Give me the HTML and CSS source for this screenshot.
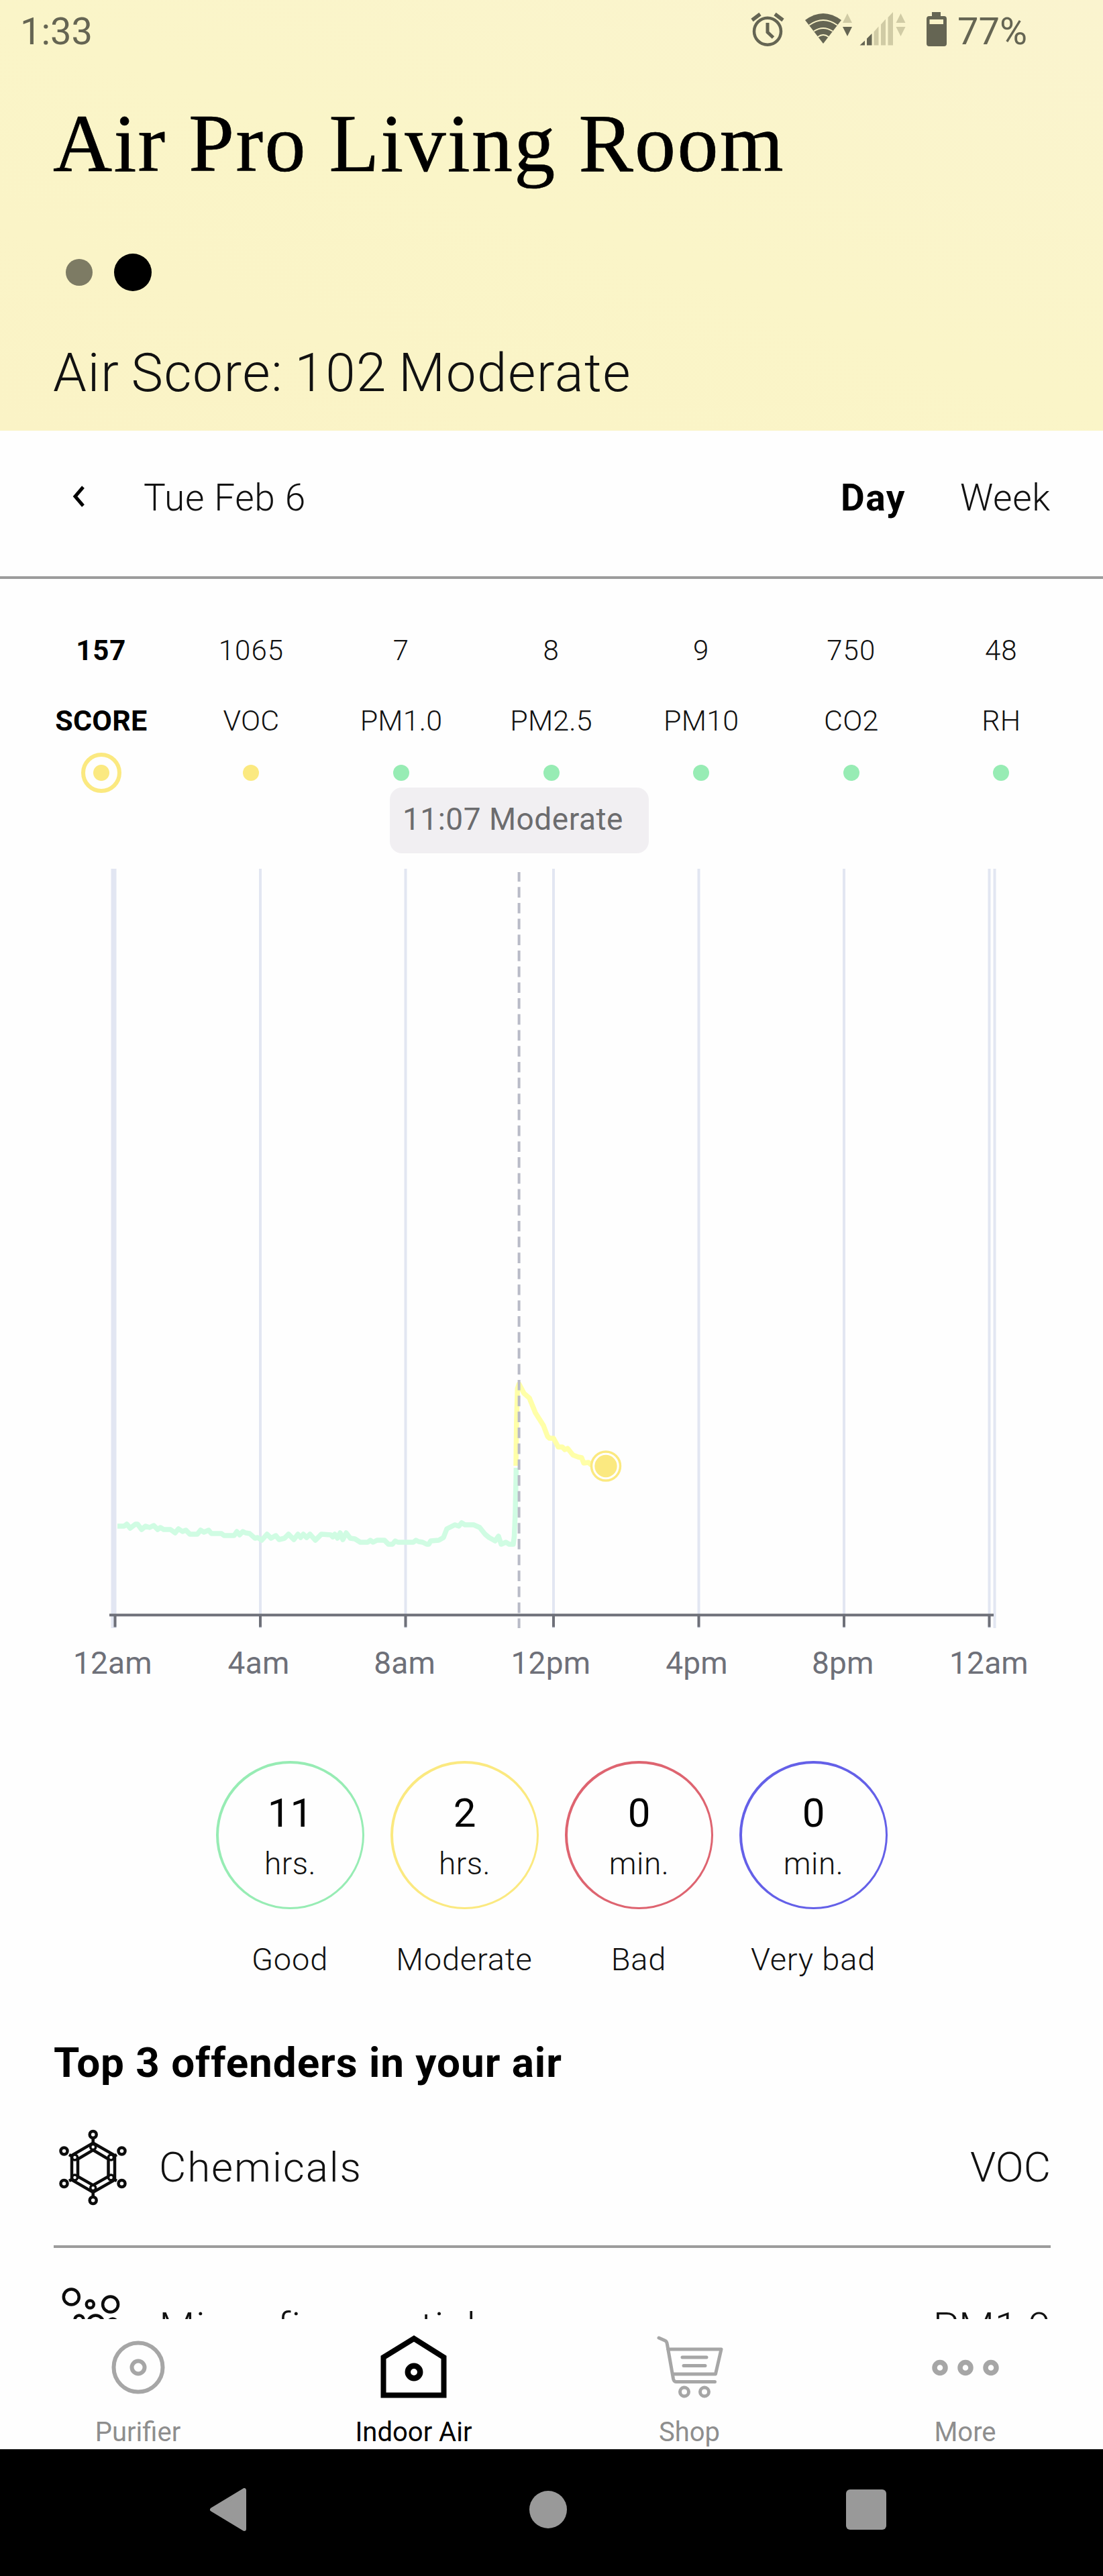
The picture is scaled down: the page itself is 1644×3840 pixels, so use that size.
FILE: index.html
```html
<!DOCTYPE html>
<html lang="en">
<head>
  <meta charset="UTF-8">
  <meta name="viewport" content="width=device-width, initial-scale=1.0">
  <title>Air Pro Living Room</title>
  <link rel="stylesheet" href="styles.css">
</head>
<body>
  <div class="screen">
    <header class="header">
      <div class="status-bar">
        <span>1:33</span>
        <div class="status-right">
          <svg class="status-icons" width="306" height="92" viewBox="1114 0 306 92">
            <g fill="none" stroke="#656553" stroke-width="4.5">
              <circle cx="1145" cy="46.7" r="20"/>
              <path d="M1145 34v14l8.5 8" stroke-width="5"/>
              <path d="M1122 30l12-9M1168 30l-12-9" stroke-width="5.5"/>
            </g>
            <path d="M1201 30Q1228 10 1255 30L1228 65Z" fill="#656553"/>
            <g fill="none" stroke="#fbf4c9" stroke-width="2">
              <path d="M1207 37.500q21-15 42 0M1214 46.500q14-9 28 0M1220 55q8-6 16 0"/>
            </g>
            <path d="M1264 20l7 14h-14zM1343.500 20l7 14h-14zM1343.500 54l7-14h-14z" fill="#d0cba5"/>
            <path d="M1264 54l7-14h-14z" fill="#656553"/>
            <path d="M1282.500 67.500l7.500-7v7zM1293 67.500v-10l7.500-7.500v17.500z" fill="#656553"/>
            <path d="M1303.500 67.500v-20l7-8v28zM1314 67.500v-31l7-8v39zM1324.500 67.500v-41.500l7.500-8v49.500z" fill="#d0cba5"/>
            <path d="M1390 18h13v6h5q4 0 4 4v37q0 4-4 4h-22q-4 0-4-4v-37q0-4 4-4h4z" fill="#656553"/>
            <path d="M1386.500 29h20.500v7h-20.500z" fill="#fbf4c9"/>
          </svg>
          <span>77%</span>
        </div>
      </div>
      <h1>Air Pro Living Room</h1>
      <div class="pager">
        <span class="page-dot"></span>
        <span class="page-dot active"></span>
      </div>
      <p class="air-score">Air Score: 102 Moderate</p>
    </header>

    <main class="content">
      <div class="toolbar">
        <svg class="chevron" width="20" height="32" viewBox="0 0 20 32"><path d="M16 2L4 16l12 14"/></svg>
        <span class="date">Tue Feb 6</span>
        <span class="range active">Day</span>
        <span class="range">Week</span>
      </div>

      <div class="metrics">
        <div class="metric selected"><span class="value">157</span><span class="name">SCORE</span><i class="dot yellow"></i></div>
        <div class="metric"><span class="value">1065</span><span class="name">VOC</span><i class="dot yellow"></i></div>
        <div class="metric"><span class="value">7</span><span class="name">PM1.0</span><i class="dot"></i></div>
        <div class="metric"><span class="value">8</span><span class="name">PM2.5</span><i class="dot"></i></div>
        <div class="metric"><span class="value">9</span><span class="name">PM10</span><i class="dot"></i></div>
        <div class="metric"><span class="value">750</span><span class="name">CO2</span><i class="dot"></i></div>
        <div class="metric"><span class="value">48</span><span class="name">RH</span><i class="dot"></i></div>
      </div>

      <div class="chart">
        <svg width="1644" height="1266" viewBox="0 1182 1644 1266">
          <!-- grid -->
          <g stroke="#e2e6f2" stroke-width="4">
            <path d="M169.500 1295V2427" stroke-width="8"/>
            <path d="M388 1295V2427M604.500 1295V2427M825 1295V2427M1041.500 1295V2427M1258 1295V2427M1474.500 1295V2427M1482.500 1295V2427"/>
          </g>
          <!-- axis -->
          <path d="M163 2407.500H1481M171.500 2407V2425.500M388 2407V2425.500M604.500 2407V2425.500M825 2407V2425.500M1041.500 2407V2425.500M1258 2407V2425.500M1474.500 2407V2425.500" fill="none" stroke="#6e7079" stroke-width="4"/>
          <!-- score -->
          <polyline class="line good" points="175,2275 185,2275 189,2272 194,2278 202,2272 205,2272 211,2280 217,2275 223,2277 229,2274 235,2280 239,2277 244,2280 254,2280 261,2285 266,2279 272,2283 277,2281 283,2287 294,2287 299,2281 304,2284 311,2281 315,2286 330,2286 334,2289 349,2289 353,2283 357,2288 362,2283 366,2285 372,2286 380,2293 384,2292 390,2296 398,2287 404,2293 411,2289 416,2295 424,2293 430,2287 438,2295 444,2287 448,2292 452,2287 457,2292 462,2287 470,2296 479,2287 493,2288 496,2291 499,2287 503,2293 507,2285 511,2295 516,2285 522,2293 529,2294 537,2299 548,2299 552,2296 556,2299 562,2296 573,2296 579,2302 585,2302 589,2297 593,2299 616,2299 620,2296 624,2298 630,2299 636,2302 639,2302 642,2297 654,2296 661,2292 666,2279 678,2273 684,2275 688,2270 693,2273 706,2273 715,2277 723,2287 729,2292 738,2297 743,2290 747,2302 754,2299 759,2302 765,2302 766.500,2290 768,2256 769.400,2188"/>
          <polyline class="line moderate" points="769,2185 769.800,2121 771.300,2070 773.600,2063 781,2077 789,2084 798,2106 810,2125 816,2141 819,2144 825,2144 832,2157 838,2157 842,2161 846,2159 854,2169 862,2172 867,2173 870,2181 877,2180 883,2185"/>
          <path d="M773.600 1300V2427" stroke="#b9bbc7" stroke-width="4" stroke-dasharray="15.700 8" stroke-dashoffset="1.500"/>
          <circle cx="903" cy="2185.500" r="21.500" fill="#fff" stroke="#fbe980" stroke-width="3.500"/>
          <circle cx="903" cy="2185.500" r="16.700" fill="#fbe980"/>
        </svg>
        <div class="tooltip">11:07 Moderate</div>
        <div class="hours">
          <span>12am</span><span>4am</span><span>8am</span><span>12pm</span><span>4pm</span><span>8pm</span><span>12am</span>
        </div>
      </div>

      <div class="summary">
        <div class="level"><div class="ring good"><b>11</b><span>hrs.</span></div><p>Good</p></div>
        <div class="level"><div class="ring moderate"><b>2</b><span>hrs.</span></div><p>Moderate</p></div>
        <div class="level"><div class="ring bad"><b>0</b><span>min.</span></div><p>Bad</p></div>
        <div class="level"><div class="ring very-bad"><b>0</b><span>min.</span></div><p>Very bad</p></div>
      </div>

      <section class="offenders">
        <h2>Top 3 offenders in your air</h2>
        <div class="offender">
          <svg width="120" height="120" viewBox="0 0 120 120" fill="none" stroke="#0c0c0c" stroke-width="4.5">
            <path d="M58.700 23.500L91 42V78.500L58.700 97L27 78.500V42Z"/>
            <path d="M58.700 34L81.500 47.500V73.500L58.700 86.500L36 73.500V47.500Z"/>
            <path d="M58.700 17v17M58.700 104V86M94 41l-13 7M94 80l-13-7M23 41l13 7M23 80l13-7"/>
            <g fill="#fefefe">
              <circle cx="58.700" cy="11" r="5"/><circle cx="58.700" cy="109" r="5"/>
              <circle cx="101.500" cy="35.500" r="5"/><circle cx="101.500" cy="84" r="5"/>
              <circle cx="15.500" cy="35.500" r="5"/><circle cx="15.500" cy="84" r="5"/>
              <g stroke-width="3.500"><circle cx="58.700" cy="29.500" r="4"/><circle cx="58.700" cy="90.500" r="4"/>
              <circle cx="85.500" cy="45" r="4"/><circle cx="85.500" cy="75" r="4"/>
              <circle cx="31.500" cy="45" r="4"/><circle cx="31.500" cy="75" r="4"/></g>
            </g>
          </svg>
          <span class="label">Chemicals</span>
          <span class="code">VOC</span>
        </div>
        <div class="offender">
          <svg width="120" height="120" viewBox="0 0 120 120" fill="none" stroke="#0c0c0c" stroke-width="4.500">
            <circle cx="26.300" cy="14" r="11.500"/>
            <circle cx="54.300" cy="25" r="5.500"/>
            <circle cx="84.600" cy="25" r="11.500"/>
            <circle cx="38" cy="48" r="6.500"/>
            <circle cx="62.600" cy="53" r="11.500"/>
            <circle cx="88" cy="53" r="6.500"/>
          </svg>
          <span class="label small">Micro fine particles</span>
          <span class="code">PM1.0</span>
        </div>
      </section>
    </main>

    <nav class="tabs">
      <a class="tab">
        <svg width="100" height="100" viewBox="0 0 100 100"><circle cx="50" cy="50" r="36.500" stroke-width="6"/><circle cx="50" cy="50" r="9.500" stroke-width="6"/></svg>
        Purifier
      </a>
      <a class="tab active">
        <svg width="100" height="100" viewBox="0 0 100 100"><path d="M4.500 91.500V35L50 7L94.500 35V91.500Z" stroke-width="8"/><circle cx="50" cy="57" r="9.200" stroke-width="8.500"/></svg>
        Indoor Air
      </a>
      <a class="tab">
        <svg width="100" height="100" viewBox="0 0 100 100" stroke-width="5" stroke-linecap="round" stroke-linejoin="round"><path d="M4 6l9 4q3 1 3.500 6l9 51q1 4.500 4 4.500h58M17.500 23H97l-8.500 37H25M39 35h36M41 47.500h32"/><circle cx="42" cy="86.500" r="6.500"/><circle cx="72" cy="86.500" r="6.500"/></svg>
        Shop
      </a>
      <a class="tab">
        <svg width="100" height="100" viewBox="0 0 100 100" stroke-width="7.500"><circle cx="12" cy="50.500" r="8"/><circle cx="50" cy="50.500" r="8"/><circle cx="88" cy="50.500" r="8"/></svg>
        More
      </a>
    </nav>

    <div class="system-nav">
      <svg width="60" height="64" viewBox="0 0 60 64"><path d="M52 3V61L4 32Z"/></svg>
      <svg width="56" height="56" viewBox="0 0 56 56"><circle cx="28" cy="28" r="28" stroke="none"/></svg>
      <svg width="60" height="60" viewBox="0 0 60 60"><rect width="60" height="60" rx="6" stroke="none"/></svg>
    </div>
  </div>
</body>
</html>
```

FILE: styles.css
```css
* {
  box-sizing: border-box;
}
body {
  margin: 0;
  font-family: Roboto, Arial, sans-serif;
  font-weight: 300;
  color: #111;
  background-color: #fefefe;
}
h1, h2, p {
  margin: 0;
}
svg {
  display: block;
  flex-shrink: 0;
}
.screen {
  display: flex;
  flex-direction: column;
  width: 1644px;
  height: 3840px;
  overflow: hidden;
}

/* header */
.header {
  height: 642px;
  flex-shrink: 0;
  padding: 0 80px;
  background: linear-gradient(200deg, #faf4cf 0%, #faf5c8 50%, #faf3c6 100%);
}
.status-bar {
  display: flex;
  justify-content: space-between;
  height: 92px;
  margin: 0 -50px;
  padding-right: 83px;
  font-size: 56px;
  font-weight: 400;
  line-height: 94px;
  color: #656553;
}
.status-right {
  display: flex;
  gap: 8px;
}
h1 {
  margin-top: 47px;
  margin-left: -1px;
  font-family: "Liberation Serif", "Times New Roman", serif;
  font-size: 122px;
  font-weight: 400;
  line-height: 150px;
  letter-spacing: 2.3px;
  color: #000;
  -webkit-text-stroke: 0.7px #000;
}
.pager {
  display: flex;
  align-items: center;
  gap: 32px;
  height: 56px;
  margin-top: 89px;
  padding-left: 18px;
}
.page-dot {
  width: 40px;
  height: 40px;
  border-radius: 50%;
  background-color: #7d7b64;
}
.page-dot.active {
  width: 56px;
  height: 56px;
  background-color: #000;
}
.air-score {
  margin-top: 72px;
  margin-left: -1px;
  font-size: 80px;
  line-height: 100px;
  letter-spacing: 1.5px;
  word-spacing: -4px;
}

/* scrolling content */
.content {
  flex: 1;
  min-height: 0;
  overflow: hidden;
}
.toolbar {
  display: flex;
  height: 221px;
  padding: 50px 78px 0 108px;
  font-size: 55px;
  line-height: 100px;
  letter-spacing: 0.7px;
  border-bottom: 4px solid #9c9c9c;
}
.chevron {
  margin-top: 32px;
  fill: none;
  stroke: #000;
  stroke-width: 5;
}
.date {
  margin-left: 86px;
  margin-right: auto;
}
.range {
  margin-left: 81px;
}
.range.active {
  font-weight: 700;
  letter-spacing: 1.5px;
  color: #000;
}
.metrics {
  display: grid;
  grid-template-columns: repeat(7, 223.6px);
  padding: 80px 0 0 39px;
}
.metric {
  display: flex;
  flex-direction: column;
  align-items: center;
}
.value {
  font-size: 42px;
  line-height: 54px;
  letter-spacing: 1px;
}
.name {
  margin-top: 47px;
  font-size: 43px;
  line-height: 60px;
  letter-spacing: 0.2px;
}
.selected .value, .selected .name {
  font-weight: 700;
  color: #000;
}
.dot {
  width: 24px;
  height: 24px;
  margin: 36px 0 18px;
  border-radius: 50%;
  background-color: #97ecb4;
}
.dot.yellow {
  background-color: #fbe980;
}
.selected .dot {
  width: 60px;
  height: 60px;
  margin: 18px 0 0;
  border: 6px solid #fbe980;
  background: radial-gradient(circle, #fbe980 11.5px, #fefefe 12.5px);
}

/* chart */
.chart {
  position: relative;
}
.line {
  fill: none;
  stroke-width: 7.5;
  stroke-linejoin: round;
}
.line.good {
  stroke: #d0fce3;
}
.line.moderate {
  stroke: #ffffa8;
}
.tooltip {
  position: absolute;
  top: -8px;
  left: 581px;
  width: 386px;
  height: 98px;
  padding-left: 19px;
  border-radius: 18px;
  background-color: #f1eff2;
  color: #6c6c6e;
  font-size: 46px;
  font-weight: 400;
  line-height: 95px;
  letter-spacing: 0.5px;
}
.hours {
  display: grid;
  grid-template-columns: repeat(7, 217.7px);
  padding-left: 59px;
  font-size: 46px;
  font-weight: 400;
  line-height: 62px;
  height: 60px;
  text-align: center;
  letter-spacing: 0.2px;
  color: #6e7079;
}

/* time per level */
.summary {
  display: flex;
  justify-content: center;
  margin-top: 117px;
}
.level {
  display: flex;
  flex-direction: column;
  align-items: center;
  width: 260px;
}
.level p {
  margin-top: 45px;
  font-size: 47px;
  line-height: 60px;
  letter-spacing: 0.8px;
}
.ring {
  display: flex;
  flex-direction: column;
  align-items: center;
  width: 221px;
  height: 221px;
  padding-top: 39px;
  border: solid;
  border-width: 4.5px 3px 3px 4.5px;
  border-radius: 50%;
}
.ring b {
  font-size: 60px;
  font-weight: 400;
  line-height: 70px;
  color: #000;
}
.ring span {
  margin-top: 15px;
  font-size: 46px;
  line-height: 50px;
  letter-spacing: 0.5px;
}
.ring.good {
  border-color: #97ecb4;
}
.ring.moderate {
  border-color: #fbe980;
}
.ring.bad {
  border-color: #de6470;
}
.ring.very-bad {
  border-color: #6460e8;
}

/* offenders */
.offenders {
  padding: 83px 78px 0 80px;
}
h2 {
  font-size: 62px;
  font-weight: 700;
  line-height: 82px;
  height: 80px;
  letter-spacing: 0.95px;
  color: #000;
}
.offender {
  display: flex;
  align-items: center;
  gap: 37px;
  height: 237px;
  font-size: 62px;
  border-bottom: 4px solid #9c9c9c;
}
.offender + .offender {
  height: 241px;
}
.label {
  letter-spacing: 1.9px;
}
.label.small {
  letter-spacing: 1px;
}
.code {
  margin-left: auto;
}

/* bottom tabs */
.tabs {
  display: grid;
  grid-template-columns: repeat(4, 1fr);
  height: 194px;
  flex-shrink: 0;
}
.tab {
  display: flex;
  flex-direction: column;
  align-items: center;
  padding-top: 22px;
  font-size: 40px;
  font-weight: 400;
  line-height: 92px;
  color: #8e8e8e;
  white-space: nowrap;
}
.tab svg {
  flex: none;
  margin-bottom: 1px;
  fill: none;
  stroke: #a6a6a6;
}
.tab.active {
  color: #000;
}
.tab.active svg {
  stroke: #000;
}
.system-nav {
  display: flex;
  align-items: center;
  height: 189px;
  flex-shrink: 0;
  padding: 0 323px 9px 312px;
  justify-content: space-between;
  background-color: #000;
}
.system-nav svg {
  fill: #999;
  stroke: #999;
  stroke-width: 6;
  stroke-linejoin: round;
}
```
